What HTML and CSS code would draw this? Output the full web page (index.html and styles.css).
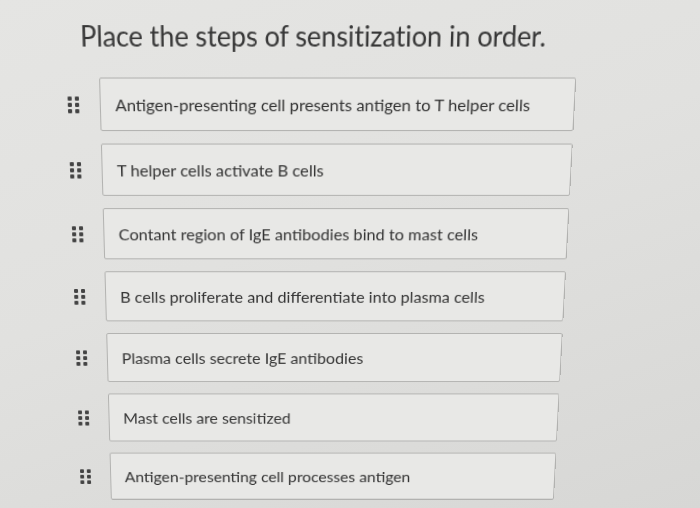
FILE: index.html
```html
<!DOCTYPE html>
<html lang="en">
<head>
    <meta charset="UTF-8">
    <meta name="viewport" content="width=device-width, initial-scale=1.0">
    <title>Ordering</title>
    <link rel="stylesheet" href="styles.css">
</head>
<body>
    <div class="sheet">
        <h1 class="prompt">Place the steps of sensitization in order.</h1>

        <ol class="steps">
            <li class="step">
                <span class="grip"><i></i><i></i><i></i><i></i><i></i><i></i></span>
                <div class="card">Antigen-presenting cell presents antigen to T helper cells</div>
            </li>
            <li class="step">
                <span class="grip"><i></i><i></i><i></i><i></i><i></i><i></i></span>
                <div class="card">T helper cells activate B cells</div>
            </li>
            <li class="step">
                <span class="grip"><i></i><i></i><i></i><i></i><i></i><i></i></span>
                <div class="card">Contant region of IgE antibodies bind to mast cells</div>
            </li>
            <li class="step">
                <span class="grip"><i></i><i></i><i></i><i></i><i></i><i></i></span>
                <div class="card">B cells proliferate and differentiate into plasma cells</div>
            </li>
            <li class="step">
                <span class="grip"><i></i><i></i><i></i><i></i><i></i><i></i></span>
                <div class="card">Plasma cells secrete IgE antibodies</div>
            </li>
            <li class="step">
                <span class="grip"><i></i><i></i><i></i><i></i><i></i><i></i></span>
                <div class="card">Mast cells are sensitized</div>
            </li>
            <li class="step">
                <span class="grip"><i></i><i></i><i></i><i></i><i></i><i></i></span>
                <div class="card">Antigen-presenting cell processes antigen</div>
            </li>
        </ol>
    </div>
</body>
</html>
```

FILE: styles.css
```css
* {
    margin: 0;
    padding: 0;
    box-sizing: border-box;
}

html, body {
    height: 100%;
    overflow: hidden;
}

body {
    font-family: Lato, 'Noto Sans', sans-serif;
    color: #333;
    background: linear-gradient(160deg, #e5e5e3 0%, #e1e1df 45%, #d7d7d5 100%);
}

/* Whole sheet, tilted slightly away at the bottom */
.sheet {
    width: 700px;
    padding: 26px 0 0 88px;
    transform-origin: 264px 290px;
    transform: perspective(1000px) rotateX(-10deg);
}

.prompt {
    font-size: 26px;
    font-weight: 400;
    letter-spacing: -0.1px;
    line-height: 34px;
    color: #363636;
    margin-bottom: 22px;
}

/* Draggable list */
.steps {
    list-style: none;
    display: flex;
    flex-direction: column;
    gap: 12px;
}

.step {
    display: flex;
    align-items: center;
    gap: 19px;
    margin-left: -14px;
}

.grip {
    display: grid;
    grid-template-columns: repeat(2, 4px);
    grid-auto-rows: 4px;
    gap: 2px 3px;
    width: 12px;
}

.grip i {
    display: block;
    background: #444;
    border-radius: 1px;
}

.card {
    width: 460px;
    height: 51px;
    display: flex;
    align-items: center;
    padding: 0 14px;
    font-size: 16.2px;
    background: #e8e8e6;
    border: 1px solid #b2b2b0;
    border-radius: 2px;
}
```
